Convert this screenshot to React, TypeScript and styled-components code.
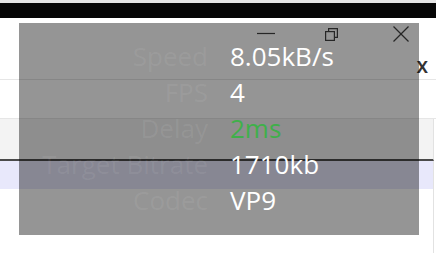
import React from "react";
import styled, { createGlobalStyle } from "styled-components";

const Global = createGlobalStyle`
  html, body { margin: 0; padding: 0; background: #ffffff; }
  body { width: 436px; height: 253px; overflow: hidden; font-family: "Open Sans", "Noto Sans", sans-serif; }
`;

const Page = styled.div`
  position: relative;
  width: 436px;
  height: 253px;
  background: #ffffff;
`;

const TopStrip = styled.div`
  height: 3px;
  background: #e4e4e4;
`;

const BlackBar = styled.div`
  height: 15px;
  background: #050505;
`;

const Table = styled.div`
  display: flex;
  flex-direction: column;
`;

const Row = styled.div<{ $h: number; $bg: string; $border: string; $bw?: number; $rightLine?: boolean }>`
  position: relative;
  height: ${(p) => p.$h}px;
  background: ${(p) => p.$bg};
  border-bottom: ${(p) => p.$bw ?? 1}px solid ${(p) => p.$border};
  display: flex;
  align-items: center;
  justify-content: flex-end;
  padding-right: 8px;
  box-sizing: content-box;
  margin-right: ${(p) => (p.$rightLine ? 2 : 0)}px;
  border-right: ${(p) => (p.$rightLine ? "1px solid #e2e2e2" : "none")};
`;

const CloseMark = styled.span`
  font-family: "Open Sans", sans-serif;
  font-size: 21px;
  font-weight: 600;
  color: #333;
  line-height: 1;
  margin-top: 34px;
`;

const Overlay = styled.div`
  position: absolute;
  left: 19px;
  top: 23px;
  width: 400px;
  height: 212px;
  background: rgba(0, 0, 0, 0.415);
`;

const Caption = styled.div`
  position: absolute;
  top: 3px;
  right: 10px;
  display: flex;
  align-items: center;
  height: 16px;
`;

const CapButton = styled.div<{ $w: number; $gap: number }>`
  width: ${(p) => p.$w}px;
  margin-left: ${(p) => p.$gap}px;
  height: 16px;
  display: flex;
  align-items: center;
  justify-content: center;
  color: #262626;
`;

const Stats = styled.div`
  display: grid;
  grid-template-columns: 189px 1fr;
  column-gap: 22px;
  padding-top: 15px;
`;

const Label = styled.div`
  text-align: right;
  font-size: 26px;
  line-height: 36px;
  color: rgba(255, 255, 255, 0.07);
  white-space: nowrap;
`;

const Value = styled.div<{ $green?: boolean }>`
  font-size: 26px;
  line-height: 36px;
  color: ${(p) => (p.$green ? "#3fb04a" : "#ffffff")};
  white-space: nowrap;
`;

const stats = [
  { label: "Speed", value: "8.05kB/s" },
  { label: "FPS", value: "4" },
  { label: "Delay", value: "2ms", green: true },
  { label: "Target Bitrate", value: "1710kb" },
  { label: "Codec", value: "VP9" },
];

export default function App() {
  return (
    <Page>
      <Global />
      <TopStrip />
      <BlackBar />
      <Table>
        <Row $h={61} $bg="#ffffff" $border="#e6e6e6">
          <CloseMark>x</CloseMark>
        </Row>
        <Row $h={38} $bg="#ffffff" $border="#e6e6e6" />
        <Row $h={40} $bg="#f3f3f3" $border="#4a4a4a" $bw={2} $rightLine />
        <Row $h={28} $bg="#e8e8fb" $border="#e8e8fb" $bw={0} $rightLine />
        <Row $h={64} $bg="#ffffff" $border="#ffffff" $bw={0} $rightLine />
      </Table>
      <Overlay>
        <Caption>
          <CapButton $w={18} $gap={0}>
            <svg width="18" height="16" viewBox="0 0 18 16">
              <line x1="0" y1="7.5" x2="18" y2="7.5" stroke="currentColor" strokeWidth="1.2" />
            </svg>
          </CapButton>
          <CapButton $w={14} $gap={49}>
            <svg width="13" height="13" viewBox="0 0 13 13" fill="none" stroke="currentColor" strokeWidth="1.2">
              <rect x="0.6" y="3.6" width="8.8" height="8.8" />
              <path d="M3.6 3.6 V0.6 H12.4 V9.4 H9.4" />
            </svg>
          </CapButton>
          <CapButton $w={16} $gap={55}>
            <svg width="16" height="16" viewBox="0 0 16 16" stroke="currentColor" strokeWidth="1.3">
              <line x1="0.5" y1="0.5" x2="15.5" y2="15.5" />
              <line x1="15.5" y1="0.5" x2="0.5" y2="15.5" />
            </svg>
          </CapButton>
        </Caption>
        <Stats>
          {stats.map((s) => (
            <React.Fragment key={s.label}>
              <Label>{s.label}</Label>
              <Value $green={s.green}>{s.value}</Value>
            </React.Fragment>
          ))}
        </Stats>
      </Overlay>
    </Page>
  );
}
